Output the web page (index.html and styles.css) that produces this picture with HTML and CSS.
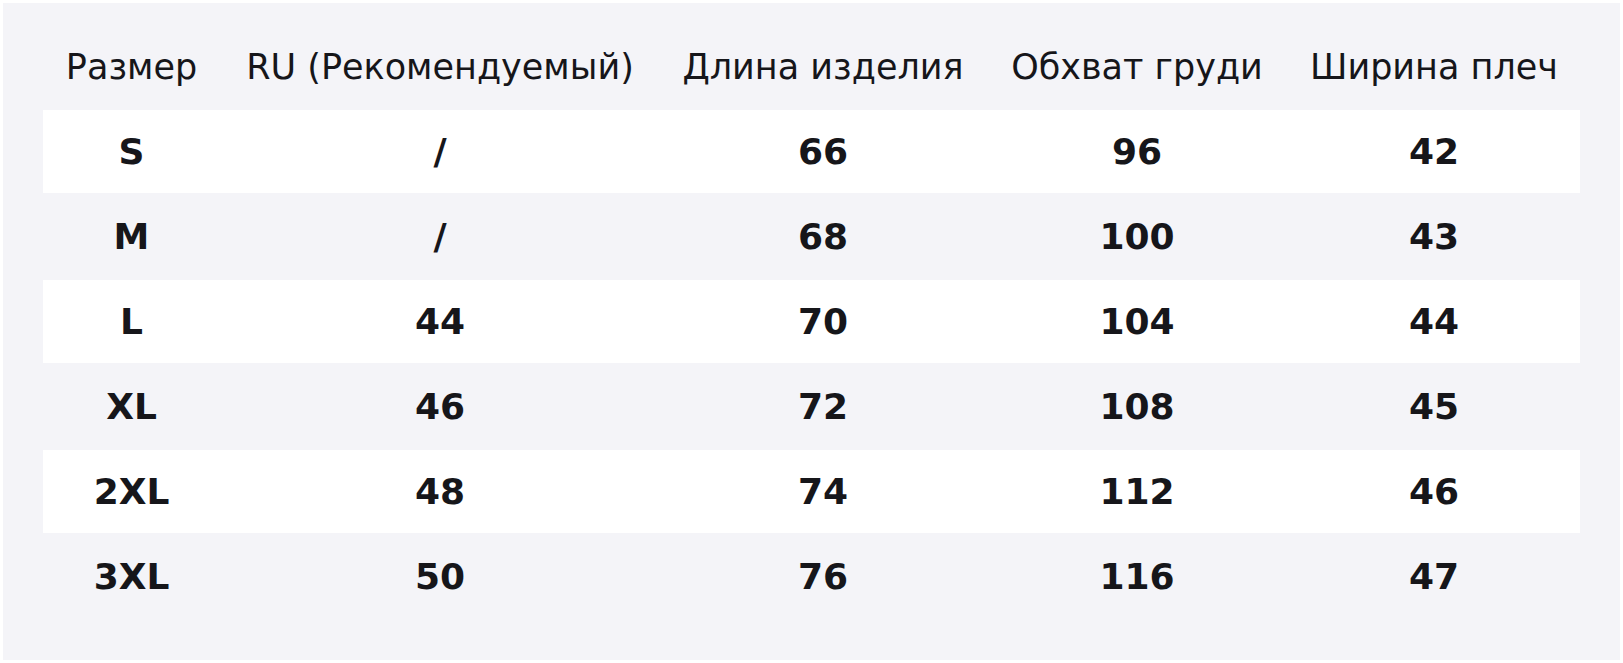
FILE: index.html
```html
<!DOCTYPE html>
<html lang="ru">
<head>
<meta charset="utf-8">
<title>Размерная таблица</title>
<link rel="stylesheet" href="styles.css">
</head>
<body>
<div class="sheet">
  <table class="sizes">
    <colgroup>
      <col class="c1"><col class="c2"><col class="c3"><col class="c4"><col class="c5">
    </colgroup>
    <thead>
      <tr><th>Размер</th><th>RU (Рекомендуемый)</th><th>Длина изделия</th><th>Обхват груди</th><th>Ширина плеч</th></tr>
    </thead>
    <tbody>
      <tr class="alt"><td>S</td><td>/</td><td>66</td><td>96</td><td>42</td></tr>
      <tr><td>M</td><td>/</td><td>68</td><td>100</td><td>43</td></tr>
      <tr class="alt"><td>L</td><td>44</td><td>70</td><td>104</td><td>44</td></tr>
      <tr><td>XL</td><td>46</td><td>72</td><td>108</td><td>45</td></tr>
      <tr class="alt"><td>2XL</td><td>48</td><td>74</td><td>112</td><td>46</td></tr>
      <tr><td>3XL</td><td>50</td><td>76</td><td>116</td><td>47</td></tr>
    </tbody>
  </table>
</div>
</body>
</html>
```
FILE: styles.css
```css
html, body {
  margin: 0;
  padding: 0;
  background: #ffffff;
}
body {
  padding: 3px;
  font-family: "DejaVu Sans", sans-serif;
  color: #16161a;
}
.sheet {
  background: #f4f4f8;
  padding: 40px;
  height: 657px;
  box-sizing: border-box;
}
.sizes {
  width: 100%;
  border-collapse: separate;
  border-spacing: 0 2px;
  table-layout: fixed;
  font-size: 36px;
}
.c1 { width: 177px; }
.c2 { width: 440px; }
.c3 { width: 326px; }
.c4 { width: 302px; }
.c5 { width: 292px; }
.sizes th {
  font-weight: normal;
  font-size: 35px;
  text-align: center;
  white-space: nowrap;
  height: 63px;
  padding: 1px 0 20px;
  box-sizing: border-box;
  line-height: 42px;
  vertical-align: top;
}
.sizes td {
  font-weight: bold;
  text-align: center;
  height: 83px;
  padding: 0;
  line-height: 42px;
  vertical-align: middle;
}
.sizes tr.alt td {
  background: #ffffff;
}
```
